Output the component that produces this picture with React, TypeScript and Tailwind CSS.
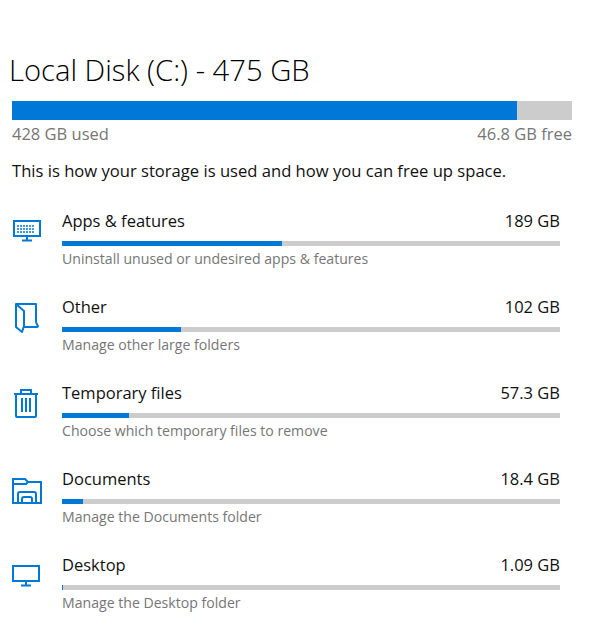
const rows = [
  { name: "Apps & features", size: "189 GB", hint: "Uninstall unused or undesired apps & features", fill: 220, icon: "apps" },
  { name: "Other", size: "102 GB", hint: "Manage other large folders", fill: 119, icon: "other" },
  { name: "Temporary files", size: "57.3 GB", hint: "Choose which temporary files to remove", fill: 67, icon: "trash" },
  { name: "Documents", size: "18.4 GB", hint: "Manage the Documents folder", fill: 21, icon: "docs" },
  { name: "Desktop", size: "1.09 GB", hint: "Manage the Desktop folder", fill: 1, icon: "desktop" },
];

function RowIcon({ kind }: { kind: string }) {
  const common = { width: 32, height: 38, viewBox: "0 0 32 38", fill: "none", stroke: "#0078d7", strokeWidth: 2 };
  if (kind === "apps")
    return (
      <svg {...common}>
        <rect x="3" y="11" width="26" height="15" />
        <path d="M16 26v4M11 30.5h10" />
        <path d="M6 16h18M6 19h18M6 22h18" strokeWidth="1.5" strokeDasharray="2 1" />
      </svg>
    );
  if (kind === "other")
    return (
      <svg {...common}>
        <path d="M5 8h20v18q1 3 2 4q0 1-1 1H13" strokeLinejoin="round" />
        <path d="M5 8l8 7v15l-2 6-6-5z" strokeLinejoin="round" />
      </svg>
    );
  if (kind === "trash")
    return (
      <svg {...common}>
        <path d="M3 12h24M10 11V8h10v3" />
        <path d="M5 12v22q0 1 1 1h18q1 0 1-1V12" />
        <path d="M11 16v14M15 16v14M19 16v14" />
      </svg>
    );
  if (kind === "docs")
    return (
      <svg {...common}>
        <path d="M6 35H2V11h12l3 3h13v21h-4M2 16h13l2-2" />
        <path d="M7 35v-9q0-2 2-2h14q2 0 2 2v9zM11 35v-4q0-2 2-2h6q2 0 2 2v4" />
      </svg>
    );
  return (
    <svg {...common}>
      <rect x="2" y="12" width="26" height="15" />
      <path d="M15 27v4M10 31.5h10" />
    </svg>
  );
}

export default function App() {
  return (
    <div className="w-[612px] h-[637px] bg-white pt-[50px] pl-3 pr-10 font-['Open_Sans','Noto_Sans',sans-serif] text-[#111111]">
      <h1 className="-ml-[3px] text-[29.2px] leading-10 font-light text-black">Local Disk (C:) - 475 GB</h1>
      <div className="mt-[11px] h-[19px] bg-[#cccccc]">
        <div className="h-full w-[505px] bg-[#0078d7]" />
      </div>
      <div className="mt-[3px] flex justify-between text-[16.5px] leading-[22px] text-[#767676]">
        <span>428 GB used</span>
        <span>46.8 GB free</span>
      </div>
      <p className="mt-[15px] text-[16.6px] leading-[22px]">This is how your storage is used and how you can free up space.</p>
      <div className="mt-[28px] flex flex-col gap-[27px]">
        {rows.map((r) => (
          <div key={r.name} className="flex">
            <div className="w-[51px] -ml-px shrink-0">
              <RowIcon kind={r.icon} />
            </div>
            <div className="w-[498px]">
              <div className="flex justify-between text-[16.5px] leading-[22px]">
                <span>{r.name}</span>
                <span>{r.size}</span>
              </div>
              <div className="mt-[9px] h-[5px] bg-[#cccccc]">
                <div className="h-full bg-[#0078d7]" style={{ width: r.fill }} />
              </div>
              <div className="mt-[3px] text-[14.1px] leading-5 text-[#767676]">{r.hint}</div>
            </div>
          </div>
        ))}
      </div>
    </div>
  );
}
